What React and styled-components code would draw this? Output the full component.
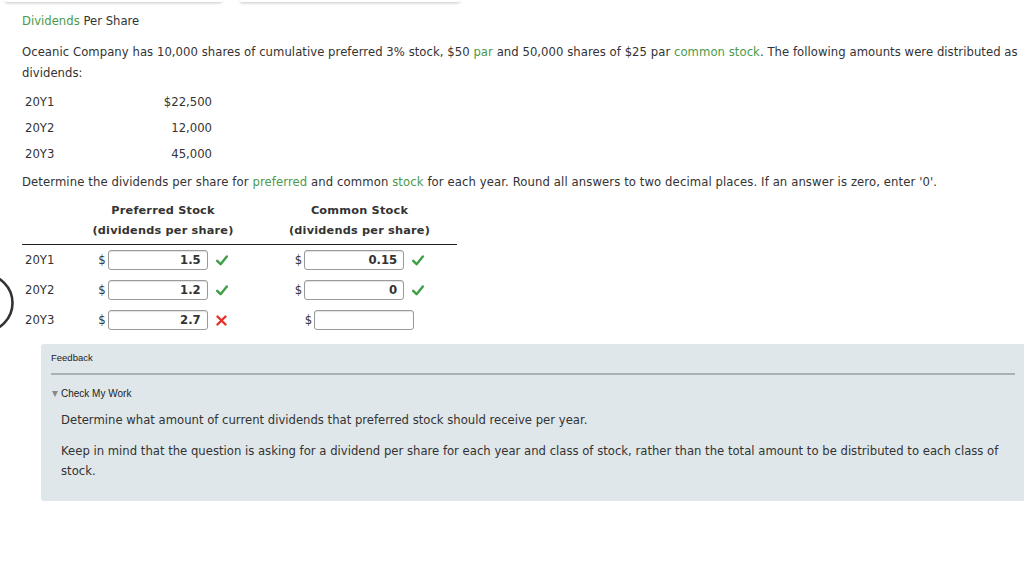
import * as React from "react"
import styled, { createGlobalStyle } from "styled-components"

const GlobalStyle = createGlobalStyle`
  html, body {
    margin: 0;
    padding: 0;
    background: #ffffff;
  }
  body {
    font-family: "DejaVu Sans", Verdana, sans-serif;
    font-size: 11.65px;
    color: #333333;
  }
`

const Page = styled.div`
  position: relative;
  width: 1024px;
  height: 565px;
  overflow: hidden;
`

const CardStrip = styled.div`
  display: flex;
  height: 2px;
  padding-left: 5px;
  gap: 18px;
`

const TopCard = styled.div`
  width: ${props => props.w}px;
  height: 2px;
  background: #ffffff;
  box-shadow: 0 1px 3px rgba(0, 0, 0, 0.28);
  border-radius: 0 0 3px 3px;
`

const Content = styled.div`
  padding: 10px 0 0 22px;
`

const Title = styled.div`
  line-height: 18px;
  color: #333;
`

const Link = styled.span`
  color: #4b9a4b;
`

const Para = styled.p`
  margin: 12px 0 0 0;
  line-height: 21px;
  padding-right: 2px;
  letter-spacing: 0.05px;
`

const AmountTable = styled.div`
  display: grid;
  grid-template-columns: 70px 120px;
  margin-top: 5px;
`

const AmountCell = styled.div`
  height: 26px;
  line-height: 26px;
  padding-left: 3px;
  text-align: ${props => (props.right ? "right" : "left")};
`

const Instruction = styled.p`
  margin: 5px 0 0 0;
  line-height: 21px;
  letter-spacing: 0.1px;
`

const AnswerTable = styled.div`
  display: grid;
  grid-template-columns: 70px 142px 223px;
  margin-top: 8px;
  width: 435px;
`

const HeadCell = styled.div`
  font-weight: bold;
  font-size: 11.3px;
  line-height: 20px;
  text-align: center;
  white-space: nowrap;
  padding: 0 0 3px ${props => props.pad || 0}px;
  border-bottom: 1px solid #222;
  letter-spacing: 0.2px;
`

const RowLabel = styled.div`
  height: 30px;
  display: flex;
  align-items: center;
  padding-left: 3px;
`

const AnswerCell = styled.div`
  height: 30px;
  display: flex;
  align-items: center;
  justify-content: center;
  padding-left: ${props => props.pad || 0}px;
`

const Dollar = styled.span`
  margin-right: 2px;
`

const Input = styled.div`
  width: 92px;
  height: 18px;
  border: 1px solid #9a9a9a;
  border-radius: 3px;
  box-shadow: inset 0 1px 1px rgba(0, 0, 0, 0.12);
  background: #fff;
  font-weight: bold;
  font-size: 11.65px;
  line-height: 18px;
  text-align: right;
  padding-right: 6px;
  color: #333;
`

const Mark = styled.span`
  display: inline-flex;
  width: 12px;
  margin-left: 8px;
  justify-content: center;
`

const Feedback = styled.div`
  margin: 9px 0 0 41px;
  width: 983px;
  box-sizing: border-box;
  background: #dfe7ea;
  border-radius: 3px 0 0 3px;
  padding: 8px 9px 20px 10px;
`

const FeedbackTitle = styled.div`
  font-family: "Liberation Sans", Arial, sans-serif;
  font-size: 9.5px;
  line-height: 12px;
  color: #222;
  padding-bottom: 9px;
  border-bottom: 2px solid #a9b1b4;
`

const Toggle = styled.div`
  display: flex;
  align-items: center;
  margin-top: 13px;
  font-family: "Liberation Sans", Arial, sans-serif;
  font-size: 10px;
  line-height: 12px;
  color: #222;
`

const Triangle = styled.span`
  width: 0;
  height: 0;
  border-left: 3.5px solid transparent;
  border-right: 3.5px solid transparent;
  border-top: 6px solid #8a8a8a;
  margin: 0 3px 0 1px;
`

const Hint = styled.p`
  margin: ${props => props.top}px 0 0 10px;
  line-height: ${props => props.lh}px;
  color: #333;
`

const Circle = styled.svg`
  position: absolute;
  left: 0;
  top: 271px;
`

const Check = () => (
  <svg width="12" height="11" viewBox="0 0 12 11">
    <path d="M1.2 5.8 L4.6 9.2 L10.8 1.4" fill="none" stroke="#3f9f47" strokeWidth="2.4" strokeLinecap="round" strokeLinejoin="round" />
  </svg>
)

const Cross = () => (
  <svg width="11" height="11" viewBox="0 0 11 11">
    <path d="M1.5 1.5 L9.5 9.5 M9.5 1.5 L1.5 9.5" fill="none" stroke="#e8302a" strokeWidth="2.4" strokeLinecap="round" />
  </svg>
)

const amounts = [
  ["20Y1", "$22,500"],
  ["20Y2", "12,000"],
  ["20Y3", "45,000"],
]

const answers = [
  { year: "20Y1", pref: "1.5", prefOk: true, common: "0.15", commonOk: true },
  { year: "20Y2", pref: "1.2", prefOk: true, common: "0", commonOk: true },
  { year: "20Y3", pref: "2.7", prefOk: false, common: "", commonOk: null },
]

const renderMark = ok => {
  if (ok === null) return null
  return <Mark>{ok ? <Check /> : <Cross />}</Mark>
}

export default function App() {
  return (
    <Page>
      <GlobalStyle />
      <CardStrip>
        <TopCard w={217} />
        <TopCard w={220} />
      </CardStrip>

      <Circle width="16" height="64" viewBox="0 0 16 64">
        <circle cx="-16" cy="32" r="28.5" fill="none" stroke="#333" strokeWidth="2.6" />
      </Circle>

      <Content>
        <Title>
          <Link>Dividends</Link> Per Share
        </Title>
        <Para>
          Oceanic Company has 10,000 shares of cumulative preferred 3% stock, $50 <Link>par</Link> and 50,000
          shares of $25 par <Link>common stock</Link>. The following amounts were distributed as dividends:
        </Para>

        <AmountTable>
          {amounts.map(([y, v]) => (
            <React.Fragment key={y}>
              <AmountCell>{y}</AmountCell>
              <AmountCell right>{v}</AmountCell>
            </React.Fragment>
          ))}
        </AmountTable>

        <Instruction>
          Determine the dividends per share for <Link>preferred</Link> and common <Link>stock</Link> for each year.
          Round all answers to two decimal places. If an answer is zero, enter '0'.
        </Instruction>

        <AnswerTable>
          <HeadCell />
          <HeadCell>
            Preferred Stock
            <br />
            (dividends per share)
          </HeadCell>
          <HeadCell pad={28}>
            Common Stock
            <br />
            (dividends per share)
          </HeadCell>
          {answers.map(a => (
            <React.Fragment key={a.year}>
              <RowLabel>{a.year}</RowLabel>
              <AnswerCell>
                <Dollar>$</Dollar>
                <Input>{a.pref}</Input>
                {renderMark(a.prefOk)}
              </AnswerCell>
              <AnswerCell pad={28}>
                <Dollar>$</Dollar>
                <Input>{a.common}</Input>
                {renderMark(a.commonOk)}
              </AnswerCell>
            </React.Fragment>
          ))}
        </AnswerTable>
      </Content>

      <Feedback>
        <FeedbackTitle>Feedback</FeedbackTitle>
        <Toggle>
          <Triangle />
          Check My Work
        </Toggle>
        <Hint top={10} lh={21}>
          Determine what amount of current dividends that preferred stock should receive per year.
        </Hint>
        <Hint top={10} lh={20}>
          Keep in mind that the question is asking for a dividend per share for each year and class of stock,
          rather than the total amount to be distributed to each class of stock.
        </Hint>
      </Feedback>
    </Page>
  )
}
